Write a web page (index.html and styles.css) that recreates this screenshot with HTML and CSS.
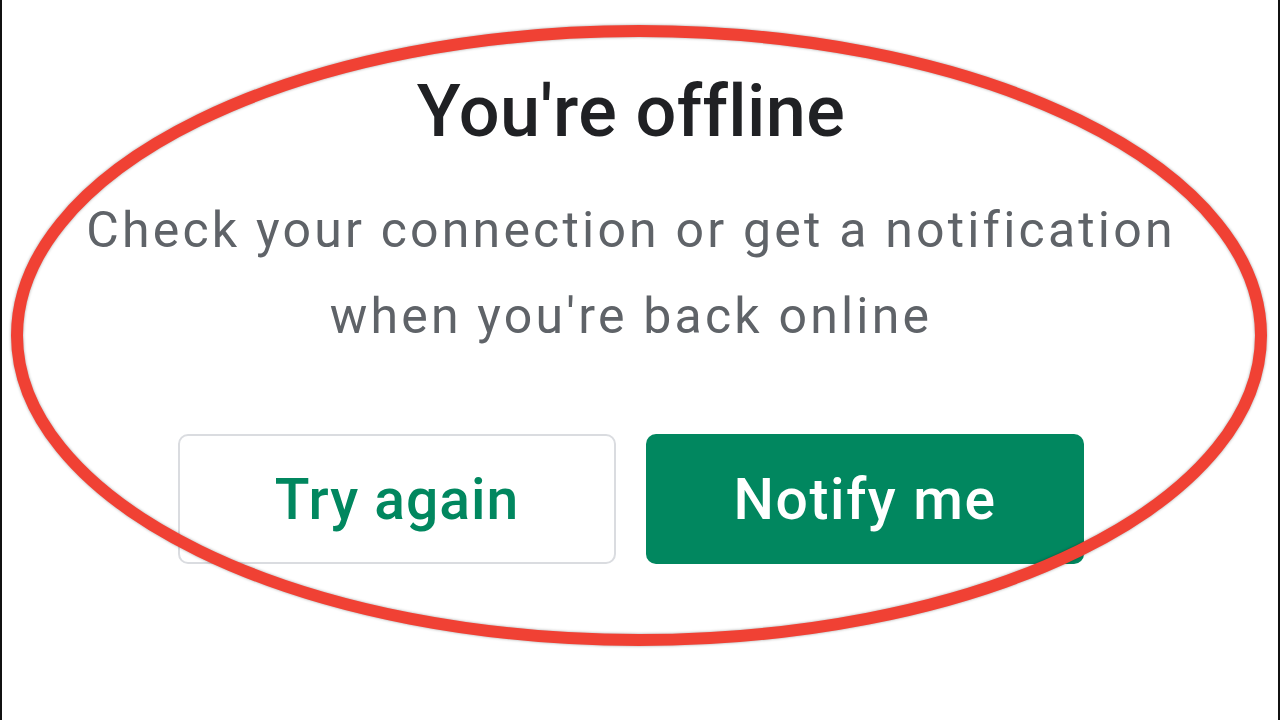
FILE: index.html
```html
<!DOCTYPE html>
<html lang="en">
<head>
    <meta charset="UTF-8">
    <meta name="viewport" content="width=device-width, initial-scale=1.0">
    <title>You're offline</title>
    <link rel="stylesheet" href="styles.css">
</head>
<body>

<main class="dialog">
    <h1 class="title">You're offline</h1>
    <p class="message">Check your connection or get a notification<br>when you're back online</p>

    <div class="actions">
        <button class="btn btn-outline">Try again</button>
        <button class="btn btn-filled">Notify me</button>
    </div>
</main>

<!-- red marker ring drawn over the dialog -->
<svg class="ring" width="1280" height="720" viewBox="0 0 1280 720">
    <ellipse cx="639" cy="335.5" rx="622" ry="304.5" fill="none" stroke="#f04134" stroke-width="12"/>
</svg>

</body>
</html>
```

FILE: styles.css
```css
body {
    margin: 0;
    width: 1280px;
    height: 720px;
    overflow: hidden;
    position: relative;
    background: #fff;
    box-shadow: inset 2px 0 #111, inset -2px 0 #111;
    font-family: Roboto, 'Liberation Sans', sans-serif;
}
.dialog {
    display: flex;
    flex-direction: column;
    align-items: center;
    padding: 76px 18px 0 0;
}
.title {
    margin: 0;
    font-size: 72px;
    line-height: 71px;
    font-weight: 500;
    letter-spacing: 0.4px;
    color: #202124;
}
.message {
    margin: 40px 0 0;
    font-size: 50px;
    line-height: 86px;
    letter-spacing: 3.2px;
    color: #5f6368;
    text-align: center;
}
.actions {
    display: flex;
    gap: 30px;
    margin-top: 75px;
}
.btn {
    width: 438px;
    height: 130px;
    border-radius: 10px;
    font-family: Roboto, 'Liberation Sans', sans-serif;
    font-size: 57px;
    font-weight: 500;
    letter-spacing: 1.6px;
    cursor: pointer;
}
.btn-outline {
    background: #fff;
    color: #01875f;
    border: 2px solid #dadce0;
    letter-spacing: 1px;
}
.btn-filled {
    background: #01875f;
    color: #fff;
    border: none;
}
.ring {
    position: absolute;
    top: 0;
    left: 0;
    filter: drop-shadow(0 0 1.5px rgba(0, 0, 0, 0.35));
}
```
